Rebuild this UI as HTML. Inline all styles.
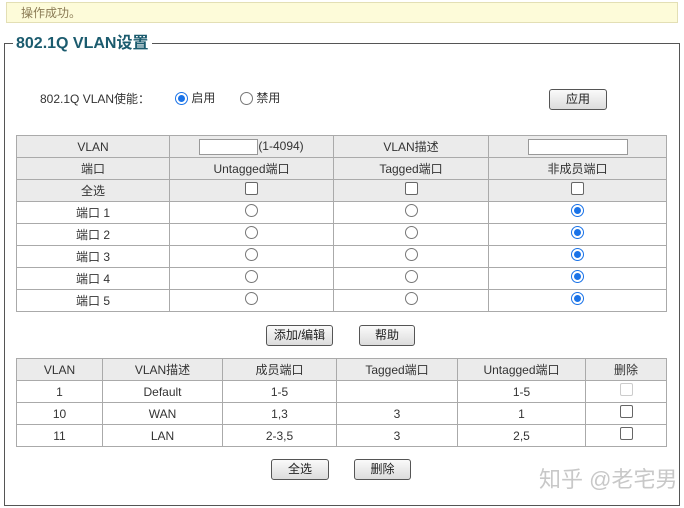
<!DOCTYPE html>
<html><head><meta charset="utf-8"><style>
*{box-sizing:border-box;margin:0;padding:0}
body{width:684px;height:508px;background:#fff;position:relative;overflow:hidden;font-family:"Liberation Sans","Noto Sans CJK SC",sans-serif;font-size:12px;color:#333}
.a{position:absolute}
.note{left:6px;top:2px;width:672px;height:21px;background:#fdfbd9;border:1px solid #e3dfb5;color:#8b7b55;padding-left:14px;line-height:20px}
.fs{left:4px;top:43px;width:676px;height:463px;border:1px solid #555;border-top:1px solid #555}
.leg{left:13px;top:34px;background:#fff;padding:0 3px;font-weight:bold;font-size:16px;color:#1b5b6e;line-height:20px}
.btn{position:absolute;height:21px;border:1px solid #555;border-radius:3px;background:linear-gradient(#fafafa,#dcdcdc);text-align:center;line-height:19px;font-size:12px;color:#222}
table{position:absolute;border-collapse:collapse;table-layout:fixed}
td{border:1px solid #aaa;text-align:center;height:22px;padding:0;font-size:12px;color:#333}
.g td{background:#ebebeb}
.r{display:inline-block;width:13px;height:13px;border:1px solid #777;border-radius:50%;vertical-align:middle;background:#fff}
td .r,td .c{position:relative;top:-3px}
.rs{border:1px solid #1a73e8;position:relative}
.rs:after{content:"";position:absolute;left:2px;top:2px;width:7px;height:7px;border-radius:50%;background:#1a73e8}
.c{display:inline-block;width:13px;height:13px;border:1px solid #666;border-radius:2px;vertical-align:middle;background:#fff}
.cd{border-color:#ccc}
.inp{display:inline-block;width:59px;height:16px;border:1px solid #999;vertical-align:middle;background:#fff}
</style></head><body>
<div class="a note">操作成功。</div>
<div class="a fs"></div>
<div class="a leg">802.1Q VLAN设置</div>
<div class="a" style="left:40px;top:91px;line-height:16px">802.1Q VLAN使能：</div>
<div class="a" style="left:175px;top:90px;line-height:16px"><span class="r rs"></span> 启用</div>
<div class="a" style="left:240px;top:90px;line-height:16px"><span class="r"></span> 禁用</div>
<div class="btn" style="left:549px;top:89px;width:58px">应用</div>

<table style="left:16px;top:135px;width:650px">
<colgroup><col style="width:153px"><col style="width:164px"><col style="width:155px"><col style="width:178px"></colgroup>
<tr class="g"><td>VLAN</td><td><span class="inp"></span>(1-4094)</td><td>VLAN描述</td><td><span class="inp" style="width:100px"></span></td></tr>
<tr class="g"><td>端口</td><td>Untagged端口</td><td>Tagged端口</td><td>非成员端口</td></tr>
<tr class="g"><td>全选</td><td><span class="c"></span></td><td><span class="c"></span></td><td><span class="c"></span></td></tr>
<tr><td>端口 1</td><td><span class="r"></span></td><td><span class="r"></span></td><td><span class="r rs"></span></td></tr>
<tr><td>端口 2</td><td><span class="r"></span></td><td><span class="r"></span></td><td><span class="r rs"></span></td></tr>
<tr><td>端口 3</td><td><span class="r"></span></td><td><span class="r"></span></td><td><span class="r rs"></span></td></tr>
<tr><td>端口 4</td><td><span class="r"></span></td><td><span class="r"></span></td><td><span class="r rs"></span></td></tr>
<tr><td>端口 5</td><td><span class="r"></span></td><td><span class="r"></span></td><td><span class="r rs"></span></td></tr>
</table>

<div class="btn" style="left:266px;top:325px;width:67px">添加/编辑</div>
<div class="btn" style="left:359px;top:325px;width:56px">帮助</div>

<table style="left:16px;top:358px;width:650px">
<colgroup><col style="width:86px"><col style="width:120px"><col style="width:114px"><col style="width:121px"><col style="width:128px"><col style="width:81px"></colgroup>
<tr class="g"><td>VLAN</td><td>VLAN描述</td><td>成员端口</td><td>Tagged端口</td><td>Untagged端口</td><td>删除</td></tr>
<tr><td>1</td><td>Default</td><td>1-5</td><td></td><td>1-5</td><td><span class="c cd"></span></td></tr>
<tr><td>10</td><td>WAN</td><td>1,3</td><td>3</td><td>1</td><td><span class="c"></span></td></tr>
<tr><td>11</td><td>LAN</td><td>2-3,5</td><td>3</td><td>2,5</td><td><span class="c"></span></td></tr>
</table>

<div class="btn" style="left:271px;top:459px;width:58px">全选</div>
<div class="btn" style="left:354px;top:459px;width:57px">删除</div>
<div class="a" style="left:539px;top:467px;font-size:22px;color:#c8c8c8;line-height:26px">知乎 @老宅男</div>
</body></html>
